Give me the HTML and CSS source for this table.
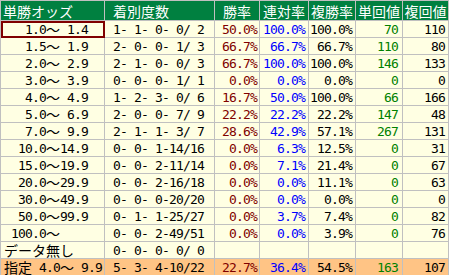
FILE: index.html
```html
<!DOCTYPE html>
<html lang="ja">
<head>
<meta charset="utf-8">
<title>単勝オッズ別成績</title>
<link rel="stylesheet" href="styles.css">
</head>
<body>
<table class="stats">
  <colgroup>
    <col class="c-odds"><col class="c-rec"><col class="c-win"><col class="c-ren"><col class="c-fuku"><col class="c-tan"><col class="c-fkv">
  </colgroup>
  <thead>
    <tr class="head">
      <th class="h-left">単勝オッズ</th>
      <th class="h-rec">着別度数</th>
      <th>勝率</th>
      <th>連対率</th>
      <th>複勝率</th>
      <th>単回値</th>
      <th>複回値</th>
    </tr>
  </thead>
  <tbody>
    <tr><td class="odds sel">   1.0<span class="w">〜</span> 1.4</td><td class="rec">1- 1- 0- 0/ 2</td><td class="win">50.0%</td><td class="ren">100.0%</td><td class="num">100.0%</td><td class="tan">70</td><td class="num">110</td></tr>
    <tr><td class="odds">   1.5<span class="w">〜</span> 1.9</td><td class="rec">2- 0- 0- 1/ 3</td><td class="win">66.7%</td><td class="ren">66.7%</td><td class="num">66.7%</td><td class="tan">110</td><td class="num">80</td></tr>
    <tr><td class="odds">   2.0<span class="w">〜</span> 2.9</td><td class="rec">2- 1- 0- 0/ 3</td><td class="win">66.7%</td><td class="ren">100.0%</td><td class="num">100.0%</td><td class="tan">146</td><td class="num">133</td></tr>
    <tr><td class="odds">   3.0<span class="w">〜</span> 3.9</td><td class="rec">0- 0- 0- 1/ 1</td><td class="win">0.0%</td><td class="ren">0.0%</td><td class="num">0.0%</td><td class="tan">0</td><td class="num">0</td></tr>
    <tr><td class="odds">   4.0<span class="w">〜</span> 4.9</td><td class="rec">1- 2- 3- 0/ 6</td><td class="win">16.7%</td><td class="ren">50.0%</td><td class="num">100.0%</td><td class="tan">66</td><td class="num">166</td></tr>
    <tr><td class="odds">   5.0<span class="w">〜</span> 6.9</td><td class="rec">2- 0- 0- 7/ 9</td><td class="win">22.2%</td><td class="ren">22.2%</td><td class="num">22.2%</td><td class="tan">147</td><td class="num">48</td></tr>
    <tr><td class="odds">   7.0<span class="w">〜</span> 9.9</td><td class="rec">2- 1- 1- 3/ 7</td><td class="win">28.6%</td><td class="ren">42.9%</td><td class="num">57.1%</td><td class="tan">267</td><td class="num">131</td></tr>
    <tr><td class="odds">  10.0<span class="w">〜</span>14.9</td><td class="rec">0- 0- 1-14/16</td><td class="win">0.0%</td><td class="ren">6.3%</td><td class="num">12.5%</td><td class="tan">0</td><td class="num">31</td></tr>
    <tr><td class="odds">  15.0<span class="w">〜</span>19.9</td><td class="rec">0- 0- 2-11/14</td><td class="win">0.0%</td><td class="ren">7.1%</td><td class="num">21.4%</td><td class="tan">0</td><td class="num">67</td></tr>
    <tr><td class="odds">  20.0<span class="w">〜</span>29.9</td><td class="rec">0- 0- 2-16/18</td><td class="win">0.0%</td><td class="ren">0.0%</td><td class="num">11.1%</td><td class="tan">0</td><td class="num">63</td></tr>
    <tr><td class="odds">  30.0<span class="w">〜</span>49.9</td><td class="rec">0- 0- 0-20/20</td><td class="win">0.0%</td><td class="ren">0.0%</td><td class="num">0.0%</td><td class="tan">0</td><td class="num">0</td></tr>
    <tr><td class="odds">  50.0<span class="w">〜</span>99.9</td><td class="rec">0- 1- 1-25/27</td><td class="win">0.0%</td><td class="ren">3.7%</td><td class="num">7.4%</td><td class="tan">0</td><td class="num">82</td></tr>
    <tr><td class="odds"> 100.0<span class="w">〜</span></td><td class="rec">0- 0- 2-49/51</td><td class="win">0.0%</td><td class="ren">0.0%</td><td class="num">3.9%</td><td class="tan">0</td><td class="num">76</td></tr>
    <tr><td class="odds"><span class="w">データ無し</span></td><td class="rec">0- 0- 0- 0/ 0</td><td class="win"></td><td class="ren"></td><td class="num"></td><td class="tan"></td><td class="num"></td></tr>
    <tr class="total"><td class="odds"><span class="w">指定</span> 4.0<span class="w">〜</span> 9.9</td><td class="rec">5- 3- 4-10/22</td><td class="win">22.7%</td><td class="ren">36.4%</td><td class="num">54.5%</td><td class="tan">163</td><td class="num">107</td></tr>
  </tbody>
</table>
</body>
</html>
```

FILE: styles.css
```css
html, body {
  margin: 0;
  padding: 0;
  background: #ffffff;
}

body {
  font-family: "DejaVu Sans Mono", "Liberation Mono", monospace;
  font-size: 13px;
  letter-spacing: -0.83px;
  color: #000000;
}

.stats {
  border-collapse: collapse;
  table-layout: fixed;
  width: 449px;
}

.c-odds { width: 104px; }
.c-rec  { width: 110px; }
.c-win  { width: 45px; }
.c-ren  { width: 49px; }
.c-fuku { width: 47px; }
.c-tan  { width: 47px; }
.c-fkv  { width: 46px; }

.stats th,
.stats td {
  border: 1px solid #c0c0c0;
  padding: 0;
  white-space: pre;
}

.head {
  height: 20px;
}

.stats .head th {
  height: 19px;
  background: #008040;
  color: #ffffff;
  font-family: "Noto Sans CJK JP", sans-serif;
  font-weight: normal;
  font-size: 14px;
  letter-spacing: 0;
  line-height: 18px;
  text-align: center;
}

.stats .head .h-left {
  text-align: left;
  padding-left: 2px;
}

.stats .head .h-rec {
  text-align: left;
  padding-left: 8px;
}

.stats tbody td {
  height: 16px;
  background: #ffffe3;
  line-height: 15px;
}

.stats tbody tr.total td {
  background: #ffc485;
}

.w {
  display: inline-block;
  height: 15px;
  font-family: "Noto Sans CJK JP", sans-serif;
  font-size: 14px;
  letter-spacing: 0;
  line-height: 15px;
  vertical-align: top;
}

.stats td.odds {
  text-align: left;
  padding-left: 3px;
}

.stats td.sel {
  outline: 2px solid #800000;
  outline-offset: -2px;
}

.stats td.rec {
  text-align: left;
  padding-left: 8px;
}

.stats td.win,
.stats td.ren,
.stats td.num,
.stats td.tan {
  text-align: right;
  padding-right: 3px;
}

.stats td.win { color: #800000; padding-right: 2px; }
.stats td.ren { color: #0000ff; }
.stats td.tan { color: #008000; padding-right: 4px; }
```
